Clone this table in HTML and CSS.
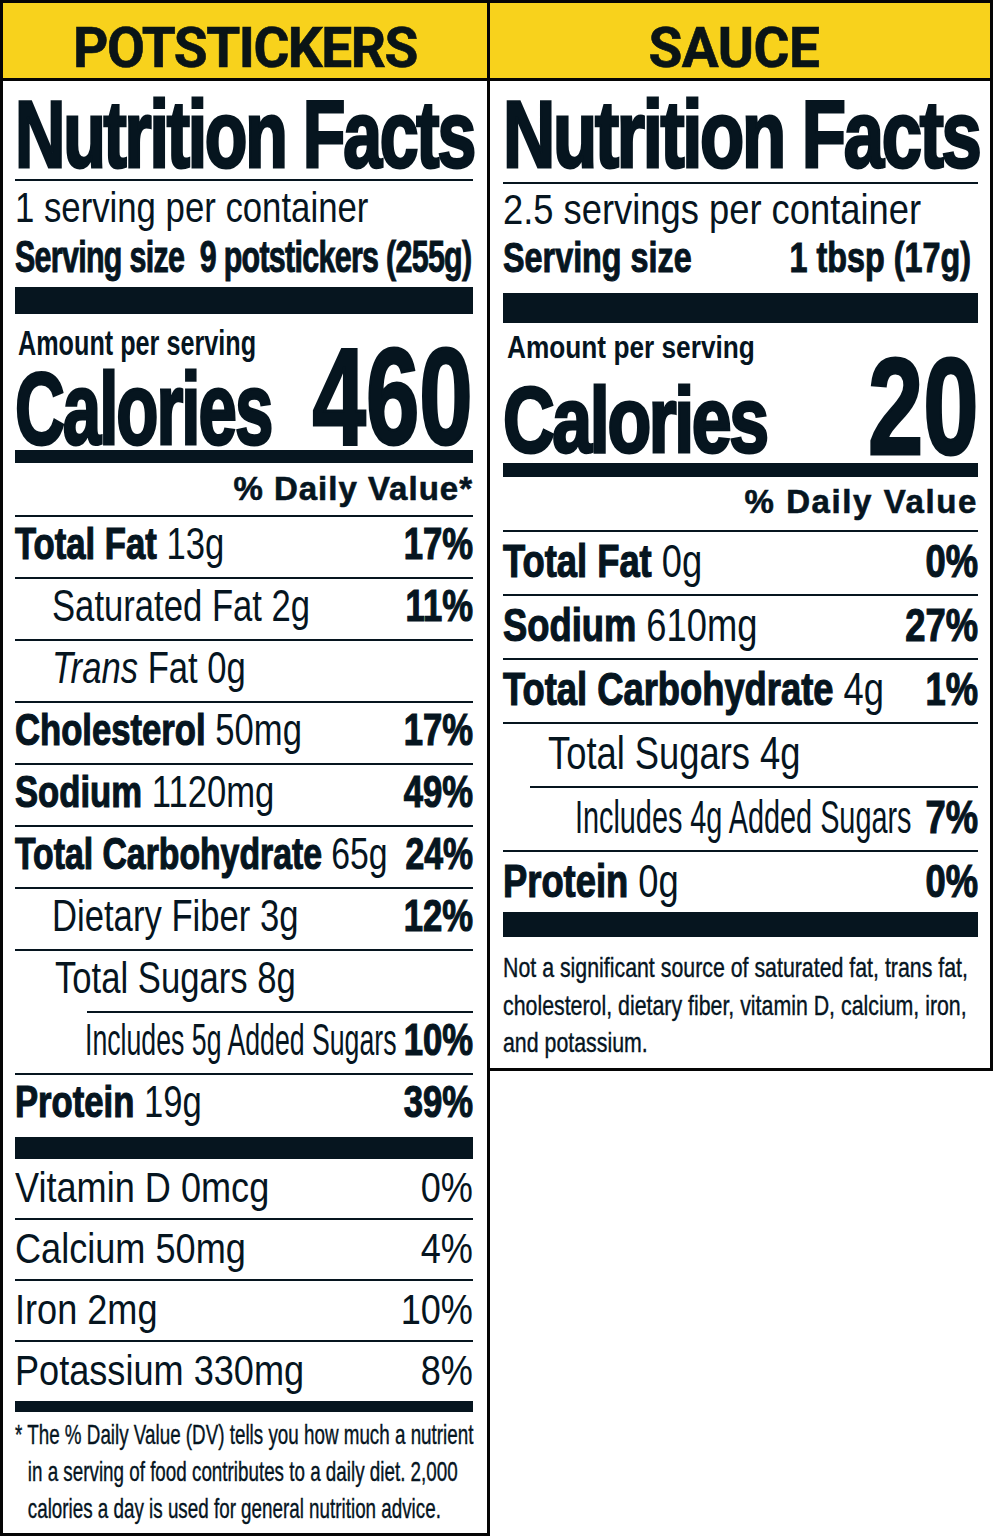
FILE: index.html
```html
<!DOCTYPE html>
<html lang="en">
<head>
<meta charset="utf-8">
<title>Nutrition Facts</title>
<link rel="stylesheet" href="styles.css">
</head>
<body>
<div class="labels">
  <section class="panel panel-left">
    <header class="head">POTSTICKERS</header>
    <div class="body body-left">
      <div class="title"><div class="x">Nutrition Facts</div></div>
      <div class="servings"><div class="x">1 serving per container</div></div>
      <div class="size"><div class="x">Serving size&nbsp; 9 potstickers (255g)</div></div>
      <div class="bar bar-top"></div>
      <div class="aps"><div class="x">Amount per serving</div></div>
      <div class="cal">
        <div class="cal-word"><span class="sq">Calories</span></div>
        <div class="cal-num"><span class="sq sq-r">460</span></div>
      </div>
      <div class="bar bar-cal"></div>
      <div class="dv">% Daily Value*</div>
      <div class="row"><div class="x"><span class="lbl"><b>Total Fat</b> 13g</span><b class="pct">17%</b></div></div>
      <div class="row ind"><div class="x"><span class="lbl">Saturated Fat 2g</span><b class="pct">11%</b></div></div>
      <div class="row ind"><div class="x"><span class="lbl"><i>Trans</i> Fat 0g</span></div></div>
      <div class="row"><div class="x"><span class="lbl"><b>Cholesterol</b> 50mg</span><b class="pct">17%</b></div></div>
      <div class="row"><div class="x"><span class="lbl"><b>Sodium</b> 1120mg</span><b class="pct">49%</b></div></div>
      <div class="row tight"><div class="x"><span class="lbl"><b>Total Carbohydrate</b> 65g</span><b class="pct">24%</b></div></div>
      <div class="row ind"><div class="x"><span class="lbl">Dietary Fiber 3g</span><b class="pct">12%</b></div></div>
      <div class="row ind ind-s part"><div class="x"><span class="lbl">Total Sugars 8g</span></div></div>
      <div class="row ind2"><div class="x"><span class="lbl"><span class="sq sq-add">Includes 5g Added Sugars</span></span><b class="pct">10%</b></div></div>
      <div class="row nob row-pro"><div class="x"><span class="lbl"><b>Protein</b> 19g</span><b class="pct">39%</b></div></div>
      <div class="bar bar-pro"></div>
      <div class="row vit"><div class="x"><span class="lbl">Vitamin D 0mcg</span><span class="pct">0%</span></div></div>
      <div class="row vit"><div class="x"><span class="lbl">Calcium 50mg</span><span class="pct">4%</span></div></div>
      <div class="row vit"><div class="x"><span class="lbl">Iron 2mg</span><span class="pct">10%</span></div></div>
      <div class="row vit nob vit-last"><div class="x"><span class="lbl">Potassium 330mg</span><span class="pct">8%</span></div></div>
      <div class="bar bar-vit"></div>
      <div class="foot"><p class="x">* The % Daily Value (DV) tells you how much a nutrient<br>in a serving of food contributes to a daily diet. 2,000<br>calories a day is used for general nutrition advice.</p></div>
    </div>
  </section>
  <section class="panel panel-right">
    <header class="head head-right">SAUCE</header>
    <div class="body body-right">
      <div class="title"><div class="x">Nutrition Facts</div></div>
      <div class="servings"><div class="x">2.5 servings per container</div></div>
      <div class="size"><div class="x"><span>Serving size</span><span>1 tbsp (17g)</span></div></div>
      <div class="bar bar-top"></div>
      <div class="aps"><div class="x">Amount per serving</div></div>
      <div class="cal">
        <div class="cal-word"><span class="sq">Calories</span></div>
        <div class="cal-num"><span class="sq sq-r">20</span></div>
      </div>
      <div class="bar bar-cal"></div>
      <div class="dv">% Daily Value</div>
      <div class="row"><div class="x"><span class="lbl"><b>Total Fat</b> 0g</span><b class="pct">0%</b></div></div>
      <div class="row"><div class="x"><span class="lbl"><b>Sodium</b> 610mg</span><b class="pct">27%</b></div></div>
      <div class="row"><div class="x"><span class="lbl"><b>Total Carbohydrate</b> 4g</span><b class="pct">1%</b></div></div>
      <div class="row ind part"><div class="x"><span class="lbl">Total Sugars 4g</span></div></div>
      <div class="row ind2"><div class="x"><span class="lbl"><span class="sq sq-add">Includes 4g Added Sugars</span></span><b class="pct">7%</b></div></div>
      <div class="row nob row-pro"><div class="x"><span class="lbl"><b>Protein</b> 0g</span><b class="pct">0%</b></div></div>
      <div class="bar bar-pro"></div>
      <div class="foot"><p class="x">Not a significant source of saturated fat, trans fat,<br>cholesterol, dietary fiber, vitamin D, calcium, iron,<br>and potassium.</p></div>
    </div>
  </section>
</div>
</body>
</html>
```

FILE: styles.css
```css
* { box-sizing: border-box; }

body {
  margin: 0;
  background: #ffffff;
  color: #06151f;
  font-family: "Liberation Sans", Arial, sans-serif;
}

.labels {
  display: flex;
  align-items: flex-start;
  width: 993px;
}

.panel {
  border: 3px solid #050505;
  background: #ffffff;
}
.panel-left { width: 490px; }
.panel-right { width: 503px; border-left: 0; }

.head {
  height: 78px;
  padding-top: 18px;
  background: #f8d21c;
  border-bottom: 3px solid #050505;
  font-family: Roboto, "Liberation Sans", sans-serif;
  font-weight: 700;
  font-size: 55px;
  line-height: 55px;
  letter-spacing: -1.5px;
  text-align: center;
  color: #0a1416;
  -webkit-text-stroke: 0.6px #0a1416;
}
.head-right { padding-right: 12px; letter-spacing: -0.5px; }

.body-left { padding: 0 14px 0 12px; }
.body-right { padding: 0 12px 0 13px; }

/* Horizontal condensing of a whole line */
.x {
  display: block;
  width: calc(100% / var(--s, 1));
  transform: scaleX(var(--s, 1));
  transform-origin: left center;
  white-space: nowrap;
}

/* Condensing of a single word group */
.sq {
  display: inline-block;
  transform: scaleX(var(--s, 1));
  transform-origin: left center;
  white-space: nowrap;
}
.sq-r { transform-origin: right center; }

/* Title */
.title {
  margin-top: 8px;
  height: 92px;
  line-height: 90px;
  border-bottom: 2px solid #06151f;
  font-weight: 700;
  font-size: 95px;
  letter-spacing: -3px;
  -webkit-text-stroke: 3px #06151f;
}
.body-left .title { --s: 0.734; }
.body-right .title { --s: 0.762; height: 95px; padding-bottom: 3px; }

/* Servings */
.servings {
  margin-top: 5px;
  font-size: 42px;
  line-height: 44px;
}
.body-left .servings { --s: 0.827; }
.body-right .servings { --s: 0.845; margin-top: 3px; font-size: 43px; }

.size {
  margin-top: 5px;
  font-weight: 700;
  font-size: 44px;
  line-height: 44px;
  -webkit-text-stroke: 1px #06151f;
}
.body-left .size { --s: 0.691; letter-spacing: -1px; }
.body-right .size { --s: 0.77; padding-right: 7px; font-size: 42px; }
.body-right .size .x {
  display: flex;
  justify-content: space-between;
}

/* Bars */
.bar { background: #06151f; }
.body-left .bar-top { margin-top: 8px; height: 27px; }
.body-right .bar-top { margin-top: 13px; height: 30px; }
.body-left .bar-cal { height: 13px; }
.body-right .bar-cal { height: 14px; }
.body-left .bar-pro { height: 22px; }
.body-right .bar-pro { height: 25px; }
.bar-vit { height: 11px; }

/* Amount per serving */
.aps { font-weight: 700; }
.body-left .aps {
  --s: 0.72;
  margin-top: 11px;
  padding-left: 3px;
  font-size: 35px;
  line-height: 35px;
}
.body-right .aps {
  --s: 0.82;
  margin-top: 8px;
  padding-left: 4px;
  font-size: 32px;
  line-height: 32px;
}

/* Calories */
.cal {
  display: flex;
  justify-content: space-between;
  align-items: flex-end;
  font-weight: 700;
  white-space: nowrap;
  -webkit-text-stroke: 3px #06151f;
}
.cal-word { flex: 1 1 auto; min-width: 0; }
.cal-word .sq { letter-spacing: -3px; }
.cal-num { flex: none; }

.body-left .cal { height: 90px; }
.body-left .cal-word { --s: 0.677; font-size: 102px; line-height: 80px; padding-bottom: 1px; }
.body-left .cal-num { --s: 0.70; font-size: 137px; line-height: 100px; padding-bottom: 3px; }

.body-right .cal { height: 100px; }
.body-right .cal-word { --s: 0.778; font-size: 92px; line-height: 72px; padding-bottom: 7px; }
.body-right .cal-num { --s: 0.72; font-size: 138px; line-height: 106px; padding-bottom: 4px; }

/* % Daily Value */
.dv {
  font-weight: 700;
  font-size: 33px;
  letter-spacing: 1px;
  text-align: right;
  border-bottom: 2px solid #06151f;
  white-space: nowrap;
  -webkit-text-stroke: 0.6px #06151f;
}
.body-left .dv { height: 54px; line-height: 52px; }
.body-right .dv { height: 55px; line-height: 49px; padding-bottom: 4px; letter-spacing: 1.6px; }

/* Nutrient rows */
.row {
  border-bottom: 2px solid #06151f;
}
.row .x {
  display: flex;
  justify-content: space-between;
}
.lbl { flex: 1 1 auto; min-width: 0; }
.pct { flex: none; }
.row b {
  font-weight: 700;
  -webkit-text-stroke: 1.2px #06151f;
}
.row i { font-style: italic; }

.body-left .row {
  --s: 0.77;
  height: 62px;
  font-size: 45px;
  line-height: 54px;
}
.body-left .row.tight { --s: 0.75; }

.body-right .row {
  --s: 0.79;
  height: 64px;
  font-size: 46px;
  line-height: 58px;
}

.body-left .ind { padding-left: 37px; }
.body-left .ind-s { padding-left: 40px; }
.body-left .ind2 { padding-left: 70px; }
.body-right .ind { padding-left: 45px; }
.body-right .ind2 { padding-left: 72px; }

.body-left .sq-add { --s: 0.77; }
.body-right .sq-add { --s: 0.793; }

.nob { border-bottom: 0; }
.part {
  border-bottom: 0;
  background: linear-gradient(#06151f, #06151f) right bottom / calc(100% - 72px) 2px no-repeat;
}
.body-right .part {
  background-size: calc(100% - 27px) 2px;
}

.body-left .row-pro { height: 62px; }
.body-right .row-pro { height: 60px; }

.body-left .vit {
  --s: 0.84;
  height: 61px;
  font-size: 43px;
  line-height: 57px;
}
.body-left .vit-last { height: 59px; }

/* Footnotes */
.foot .x {
  margin: 0;
  -webkit-text-stroke: 0.4px #06151f;
}
.body-left .foot {
  --s: 0.672;
  padding: 4px 0 6px;
  font-size: 28px;
  line-height: 37px;
}
.body-left .foot .x {
  padding-left: 19px;
  text-indent: -19px;
}
.body-right .foot {
  --s: 0.762;
  padding: 12px 0 6px;
  font-size: 28px;
  line-height: 37.5px;
}
```
